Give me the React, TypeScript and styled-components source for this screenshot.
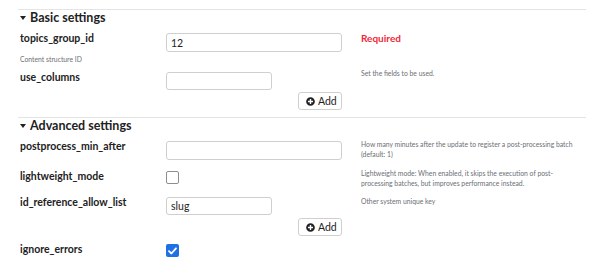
import styled, { createGlobalStyle } from 'styled-components';
import { FaPlusCircle } from 'react-icons/fa';

const GlobalStyle = createGlobalStyle`
    html, body {
        margin: 0;
        padding: 0;
        background: #ffffff;
    }
    body {
        font-family: Lato, "Noto Sans", sans-serif;
        color: #222222;
    }
`;

const Page = styled.div`
    width: 568px;
    padding: 9px 14px 0 18px;
`;

const Section = styled.section`
    border-top: 1px solid #e4e4e4;
    padding-bottom: 7px;
`;

const SectionHeader = styled.h2`
    display: flex;
    align-items: center;
    gap: 4px;
    margin: 0;
    padding-left: 2px;
    height: 15px;
    font-size: 12.5px;
    font-weight: 700;
    color: #222;
    line-height: 15px;
`;

const Caret = styled.span`
    width: 0;
    height: 0;
    border-left: 3.5px solid transparent;
    border-right: 3.5px solid transparent;
    border-top: 4px solid #222;
    margin-top: 1px;
`;

const Field = styled.div<{ $gap: number }>`
    display: grid;
    grid-template-columns: 148px 195px 1fr;
    align-items: start;
    margin-top: ${({ $gap }) => $gap}px;
`;

const LabelCell = styled.div`
    padding-left: 2px;
    margin-top: -1px;
`;

const Label = styled.div`
    font-size: 10.5px;
    font-weight: 700;
    line-height: 12px;
    color: #222;
`;

const SubText = styled.div`
    font-size: 6.8px;
    color: #6b6f75;
    margin-top: 11px;
    line-height: 9px;
`;

const Control = styled.div`
    display: flex;
    flex-direction: column;
    align-items: flex-start;
`;

const TextInput = styled.input<{ $wide?: boolean }>`
    display: block;
    box-sizing: border-box;
    width: ${({ $wide }) => ($wide ? '176px' : '106px')};
    height: ${({ $wide }) => ($wide ? '19px' : '18px')};
    margin: 0;
    border: 1px solid #cfcfcf;
    border-radius: 3px;
    padding: 0 4px;
    font-family: inherit;
    font-size: 10.5px;
    color: #222;
    background: #fff;
    outline: none;
`;

const Box = styled.span<{ $checked?: boolean }>`
    display: inline-flex;
    align-items: center;
    justify-content: center;
    box-sizing: border-box;
    width: 13px;
    height: 13px;
    border-radius: 2px;
    border: ${({ $checked }) => ($checked ? 'none' : '1px solid #8e8e8e')};
    background: ${({ $checked }) => ($checked ? '#1f6fe5' : '#fff')};
`;

const AddRow = styled.div<{ $top: number }>`
    display: flex;
    justify-content: flex-end;
    width: 176px;
    margin-top: ${({ $top }) => $top}px;
`;

const AddButton = styled.button`
    display: inline-flex;
    align-items: center;
    gap: 3px;
    box-sizing: border-box;
    height: 18px;
    width: 44px;
    margin: 0;
    padding: 0 0 0 7px;
    border: 1px solid #cfcfcf;
    border-radius: 3px;
    background: #fff;
    font-family: inherit;
    font-size: 10.5px;
    color: #222;
`;

const Help = styled.div<{ $top: number }>`
    font-size: 6.8px;
    line-height: 10px;
    color: #6b6f75;
    margin-top: ${({ $top }) => $top}px;
`;

const Required = styled.div`
    font-size: 10px;
    font-weight: 700;
    color: #f0283c;
    line-height: 12px;
    margin-top: -1px;
`;

const Check = () => (
    <svg width="9" height="8" viewBox="0 0 9 8">
        <path d="M1 4.2 L3.4 6.5 L8 1.3" fill="none" stroke="#fff" strokeWidth="1.8" strokeLinecap="round" strokeLinejoin="round" />
    </svg>
);

const App = () => {
    return (
        <Page>
            <GlobalStyle />
            <Section>
                <SectionHeader><Caret />Basic settings</SectionHeader>
                <Field $gap={8}>
                    <LabelCell>
                        <Label>topics_group_id</Label>
                        <SubText>Content structure ID</SubText>
                    </LabelCell>
                    <Control>
                        <TextInput $wide defaultValue="12" />
                    </Control>
                    <Required>Required</Required>
                </Field>
                <Field $gap={8}>
                    <LabelCell>
                        <Label>use_columns</Label>
                    </LabelCell>
                    <Control>
                        <TextInput />
                        <AddRow $top={2}>
                            <AddButton><FaPlusCircle size={9} />Add</AddButton>
                        </AddRow>
                    </Control>
                    <Help $top={-4}>Set the fields to be used.</Help>
                </Field>
            </Section>
            <Section>
                <SectionHeader><Caret />Advanced settings</SectionHeader>
                <Field $gap={8}>
                    <LabelCell>
                        <Label>postprocess_min_after</Label>
                    </LabelCell>
                    <Control>
                        <TextInput $wide />
                    </Control>
                    <Help $top={-2}>How many minutes after the update to register a post-processing batch<br />(default: 1)</Help>
                </Field>
                <Field $gap={11}>
                    <LabelCell>
                        <Label>lightweight_mode</Label>
                    </LabelCell>
                    <Control>
                        <Box />
                    </Control>
                    <Help $top={-3}>Lightweight mode: When enabled, it skips the execution of post-<br />processing batches, but improves performance instead.</Help>
                </Field>
                <Field $gap={9}>
                    <LabelCell>
                        <Label>id_reference_allow_list</Label>
                    </LabelCell>
                    <Control>
                        <TextInput defaultValue="slug" />
                        <AddRow $top={3}>
                            <AddButton><FaPlusCircle size={9} />Add</AddButton>
                        </AddRow>
                    </Control>
                    <Help $top={-1}>Other system unique key</Help>
                </Field>
                <Field $gap={8}>
                    <LabelCell>
                        <Label>ignore_errors</Label>
                    </LabelCell>
                    <Control>
                        <Box $checked><Check /></Box>
                    </Control>
                </Field>
            </Section>
        </Page>
    );
};

export default App;
